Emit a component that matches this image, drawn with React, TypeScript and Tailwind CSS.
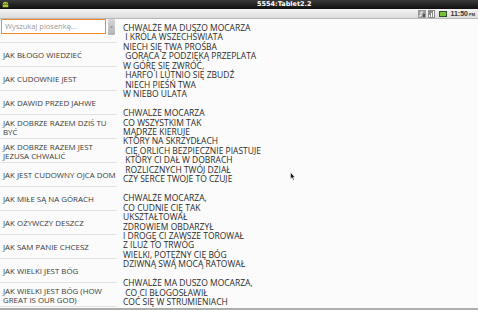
import React from 'react';

const SONGS: string[] = [
  'JAK BŁOGO WIEDZIEĆ',
  'JAK CUDOWNIE JEST',
  'JAK DAWID PRZED JAHWE',
  'JAK DOBRZE RAZEM DZIŚ TU BYĆ',
  'JAK DOBRZE RAZEM JEST JEZUSA CHWALIĆ',
  'JAK JEST CUDOWNY OJCA DOM',
  'JAK MIŁE SĄ NA GÓRACH',
  'JAK OŻYWCZY DESZCZ',
  'JAK SAM PANIE CHCESZ',
  'JAK WIELKI JEST BÓG',
  'JAK WIELKI JEST BÓG (HOW GREAT IS OUR GOD)',
];

const LYRICS = `CHWALŻE MA DUSZO MOCARZA
 I KRÓLA WSZECHŚWIATA
NIECH SIĘ TWA PROŚBA
 GORĄCA Z PODZIĘKĄ PRZEPLATA
W GÓRĘ SIĘ ZWRÓĆ,
 HARFO I LUTNIO SIĘ ZBUDŹ
 NIECH PIEŚŃ TWA
W NIEBO ULATA

CHWALŻE MOCARZA
CO WSZYSTKIM TAK
MĄDRZE KIERUJE
KTÓRY NA SKRZYDŁACH
 CIĘ ORLICH BEZPIECZNIE PIASTUJE
 KTÓRY CI DAŁ W DOBRACH
 ROZLICZNYCH TWÓJ DZIAŁ
CZY SERCE TWOJE TO CZUJE

CHWALŻE MOCARZA,
CO CUDNIE CIĘ TAK
UKSZTAŁTOWAŁ
ZDROWIEM OBDARZYŁ
I DROGĘ CI ZAWSZE TOROWAŁ
Z ILUŻ TO TRWÓG
WIELKI, POTĘŻNY CIĘ BÓG
DZIWNĄ SWĄ MOCĄ RATOWAŁ

CHWALŻE MA DUSZO MOCARZA,
 CO CI BŁOGOSŁAWIŁ
COĆ SIĘ W STRUMIENIACH`;

const AndroidLogo = () => (
  <svg width="7" height="7" viewBox="0 0 10 10">
    <path d="M1 5 A4 4 0 0 1 9 5 Z" fill="#a4c639" />
    <rect x="1" y="5.5" width="8" height="3.5" rx="0.8" fill="#a4c639" />
    <circle cx="3.4" cy="3.4" r="0.6" fill="#222" />
    <circle cx="6.6" cy="3.4" r="0.6" fill="#222" />
  </svg>
);

const StatusIcons = () => (
  <div className="flex items-center gap-[2px]">
    <svg width="8" height="8" viewBox="0 0 8 8">
      <rect x="0" y="0" width="8" height="8" fill="#9a9a9a" />
      <path d="M1 6 L3 6 L3 2 L5 2" stroke="#fff" strokeWidth="1" fill="none" />
      <rect x="5" y="4" width="2" height="3" fill="#555" />
    </svg>
    <svg width="7" height="8" viewBox="0 0 7 8">
      <rect x="0" y="0" width="7" height="8" fill="#8a8a8a" />
      <rect x="1" y="5" width="1" height="2" fill="#fff" />
      <rect x="3" y="3" width="1" height="4" fill="#fff" />
      <rect x="5" y="1" width="1" height="6" fill="#fff" />
    </svg>
    <svg width="8" height="6" viewBox="0 0 8 6" className="ml-[2px]">
      <rect x="0" y="0" width="8" height="6" fill="#2f4f2f" />
      <rect x="1" y="1" width="6" height="4" fill="#7bbf3a" />
    </svg>
  </div>
);

export default function App() {
  return (
    <div className="relative w-[478px] h-[310px] overflow-hidden flex flex-col bg-[#fbfbfb] font-['Open_Sans',sans-serif]">
      {/* emulator title bar */}
      <div className="h-[9px] shrink-0 flex items-center px-[2px] bg-gradient-to-b from-[#3a3a3a] to-[#111]">
        <AndroidLogo />
        <div className="ml-[248px] text-white font-bold text-[6.5px] leading-none font-['DejaVu_Sans',sans-serif]">
          5554:Tablet2.2
        </div>
      </div>

      {/* android status bar */}
      <div className="h-[10px] shrink-0 flex items-center justify-end pr-[3px] gap-[3px] bg-gradient-to-b from-[#f4f4f4] to-[#dcdcdc] border-b border-[#b8b8b8]">
        <StatusIcons />
        <span className="text-[7px] leading-none font-bold text-[#333] font-['Liberation_Sans',sans-serif]">
          11:50<span className="text-[4px] ml-[1px]">PM</span>
        </span>
      </div>

      <div className="flex-1 flex min-h-0">
        {/* song list */}
        <div className="w-[117px] shrink-0 flex flex-col">
          <div className="h-[24px] shrink-0 flex items-start border-b border-[#e2e2e2]">
            <div className="ml-[1px] w-[105px] h-[15px] border border-[#f08a2c] bg-white flex items-center px-[3px] text-[7.5px] text-[#9a9a9a]">
              Wyszukaj piosenkę...
            </div>
            <div className="ml-[2px] w-[7px] h-[16px] rounded-[1px] bg-gradient-to-b from-[#d6d6d6] to-[#b4b4b4] flex items-center justify-center text-[5px] text-[#666] leading-none">
              ×
            </div>
          </div>
          {SONGS.map((s) => (
            <div
              key={s}
              className="h-[24px] shrink-0 flex items-center pl-[3px] pt-[2px] border-b border-[#e2e2e2] text-[7.9px] leading-[9px] text-[#3a3a3a]"
            >
              {s}
            </div>
          ))}
        </div>

        {/* lyrics */}
        <div className="flex-1 pl-[6px] pt-[4px] whitespace-pre text-[8.5px] leading-[9.45px] text-[#2a2a2a]">
          {LYRICS}
        </div>
      </div>

      <div className="h-[2px] shrink-0 bg-[#a9b0a9]" />

      {/* mouse pointer */}
      <svg className="absolute left-[290px] top-[172px]" width="6" height="9" viewBox="0 0 6 9">
        <path d="M0.5 0.5 L0.5 7 L2 5.6 L3.2 8.3 L4.2 7.8 L3 5.2 L5 5.2 Z" fill="#111" stroke="#fff" strokeWidth="0.5" />
      </svg>
    </div>
  );
}
